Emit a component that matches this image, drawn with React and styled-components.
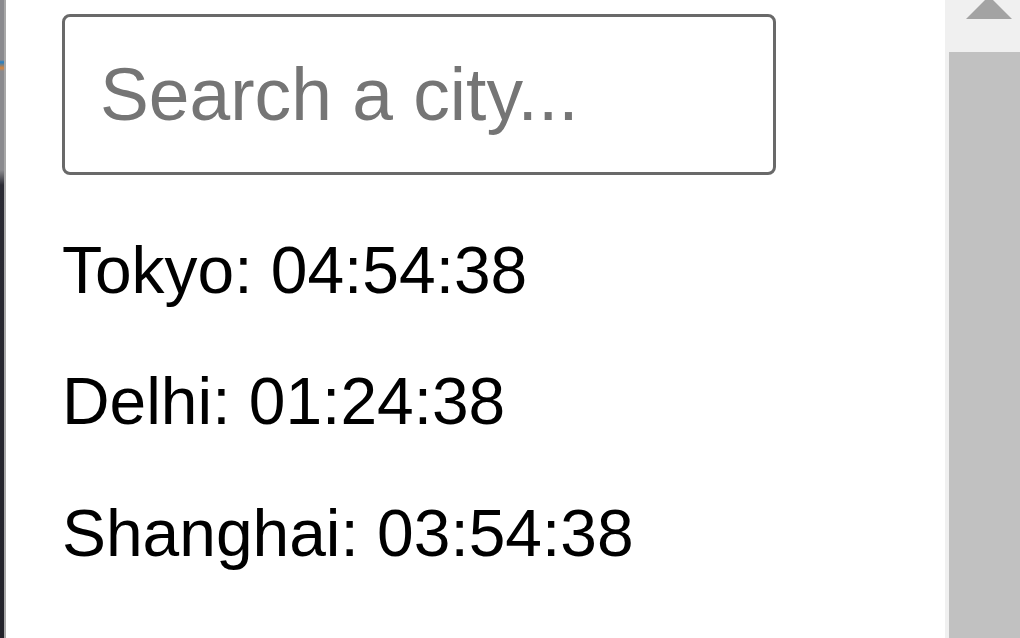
import React from "react";
import styled, { createGlobalStyle } from "styled-components";

const Global = createGlobalStyle`
  html, body { margin: 0; padding: 0; background: #ffffff; overflow: hidden; }
  body { font-family: "Liberation Sans", Arial, sans-serif; }
  #root { width: 1020px; height: 638px; }
`;

const Page = styled.div`
  display: flex;
  width: 1020px;
  height: 638px;
  background: #ffffff;
`;

const EdgeStrip = styled.div`
  width: 4px;
  flex: none;
  background: linear-gradient(
    to bottom,
    #8a8a8e 0px,
    #8a8a8e 60px,
    #1f7fc8 62px,
    #d8843a 68px,
    #8a8a8e 71px,
    #8a8a8e 170px,
    #2a2a33 185px,
    #23232b 638px
  );
  border-right: 2px solid #a8a8a8;
`;

const Main = styled.main`
  flex: 1;
  display: flex;
  flex-direction: column;
  align-items: flex-start;
  gap: 57.5px;
  padding: 14px 0 0 56px;
`;

const SearchInput = styled.input`
  box-sizing: border-box;
  width: 714px;
  height: 161px;
  border: 3px solid #696969;
  border-radius: 8px;
  padding: 0 0 0 35px;
  font-family: "Liberation Sans", Arial, sans-serif;
  font-size: 73.2px;
  color: #000;
  background: #fff;
  outline: none;
  &::placeholder { color: #757575; }
`;

const CityList = styled.div`
  display: flex;
  flex-direction: column;
  gap: 57.5px;
`;

const CityRow = styled.p`
  margin: 0;
  font-size: 65.9px;
  line-height: 74px;
  color: #000;
  white-space: nowrap;
`;

const ScrollTrack = styled.div`
  width: 75px;
  flex: none;
  background: #f0f0f0;
  display: flex;
  flex-direction: column;
  align-items: flex-end;
`;

const ArrowBox = styled.div`
  width: 75px;
  height: 52px;
  display: flex;
  justify-content: center;
`;

const Thumb = styled.div`
  flex: 1;
  width: 71px;
  background: #c1c1c1;
`;

const cities = [
  ["Tokyo", "04:54:38"],
  ["Delhi", "01:24:38"],
  ["Shanghai", "03:54:38"],
];

export default function App() {
  return (
    <>
      <Global />
      <Page>
        <EdgeStrip />
        <Main>
          <SearchInput placeholder="Search a city..." />
          <CityList>
            {cities.map(([c, t]) => (
              <CityRow key={c}>
                {c}: {t}
              </CityRow>
            ))}
          </CityList>
        </Main>
        <ScrollTrack>
          <ArrowBox>
            <svg width="75" height="52" viewBox="0 0 75 52">
              <polygon points="21,19 67,19 44,-4" fill="#a3a3a3" />
            </svg>
          </ArrowBox>
          <Thumb />
        </ScrollTrack>
      </Page>
    </>
  );
}
